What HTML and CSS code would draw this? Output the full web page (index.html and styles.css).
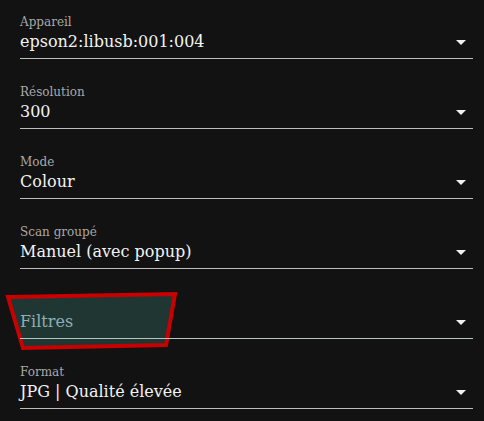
FILE: index.html
```html
<!DOCTYPE html>
<html lang="fr">
<head>
<meta charset="utf-8">
<title>Scan</title>
<link rel="stylesheet" href="styles.css">
</head>
<body>
<svg class="highlight" width="484" height="421" viewBox="0 0 484 421">
  <polygon points="8,297 175,294 166,345 23,348" fill="#1f3633" stroke="#c80000" stroke-width="4" stroke-linejoin="miter"/>
</svg>
<form class="form">
  <div class="field">
    <div class="label">Appareil</div>
    <div class="select"><span class="value">epson2:libusb:001:004</span><span class="arrow"></span></div>
  </div>
  <div class="field">
    <div class="label">Résolution</div>
    <div class="select"><span class="value">300</span><span class="arrow"></span></div>
  </div>
  <div class="field">
    <div class="label">Mode</div>
    <div class="select"><span class="value">Colour</span><span class="arrow"></span></div>
  </div>
  <div class="field">
    <div class="label">Scan groupé</div>
    <div class="select"><span class="value">Manuel (avec popup)</span><span class="arrow"></span></div>
  </div>
  <div class="field">
    <div class="label"></div>
    <div class="select select-filters"><span class="value placeholder">Filtres</span><span class="arrow"></span></div>
  </div>
  <div class="field">
    <div class="label">Format</div>
    <div class="select"><span class="value">JPG | Qualité élevée</span><span class="arrow"></span></div>
  </div>
</form>
</body>
</html>
```

FILE: styles.css
```css
html, body {
  margin: 0;
  padding: 0;
  background: #121212;
}
body {
  width: 484px;
  height: 421px;
  overflow: hidden;
  position: relative;
  font-family: "DejaVu Serif", serif;
}
.highlight {
  position: absolute;
  left: 0;
  top: 0;
  z-index: 0;
  pointer-events: none;
}
.form {
  position: relative;
  z-index: 1;
  display: flex;
  flex-direction: column;
  gap: 25px;
  padding: 14px 11px 0 20px;
  margin: 0;
}
.field {
  display: flex;
  flex-direction: column;
}
.label {
  font-size: 12px;
  line-height: 16px;
  height: 16px;
  color: #a9a9a9;
}
.select {
  display: flex;
  align-items: center;
  justify-content: space-between;
  height: 24px;
  padding-bottom: 4px;
  border-bottom: 1px solid #bdbdbd;
}
.select-filters {
  border-bottom-color: #b4c6c2;
}
.value {
  font-size: 16px;
  line-height: 24px;
  color: #f2f2f2;
  white-space: nowrap;
}
.placeholder {
  color: #8fafb6;
}
.arrow {
  width: 0;
  height: 0;
  margin-right: 7px;
  margin-top: 1px;
  border-left: 5px solid transparent;
  border-right: 5px solid transparent;
  border-top: 5px solid #f0f0f0;
}
```
